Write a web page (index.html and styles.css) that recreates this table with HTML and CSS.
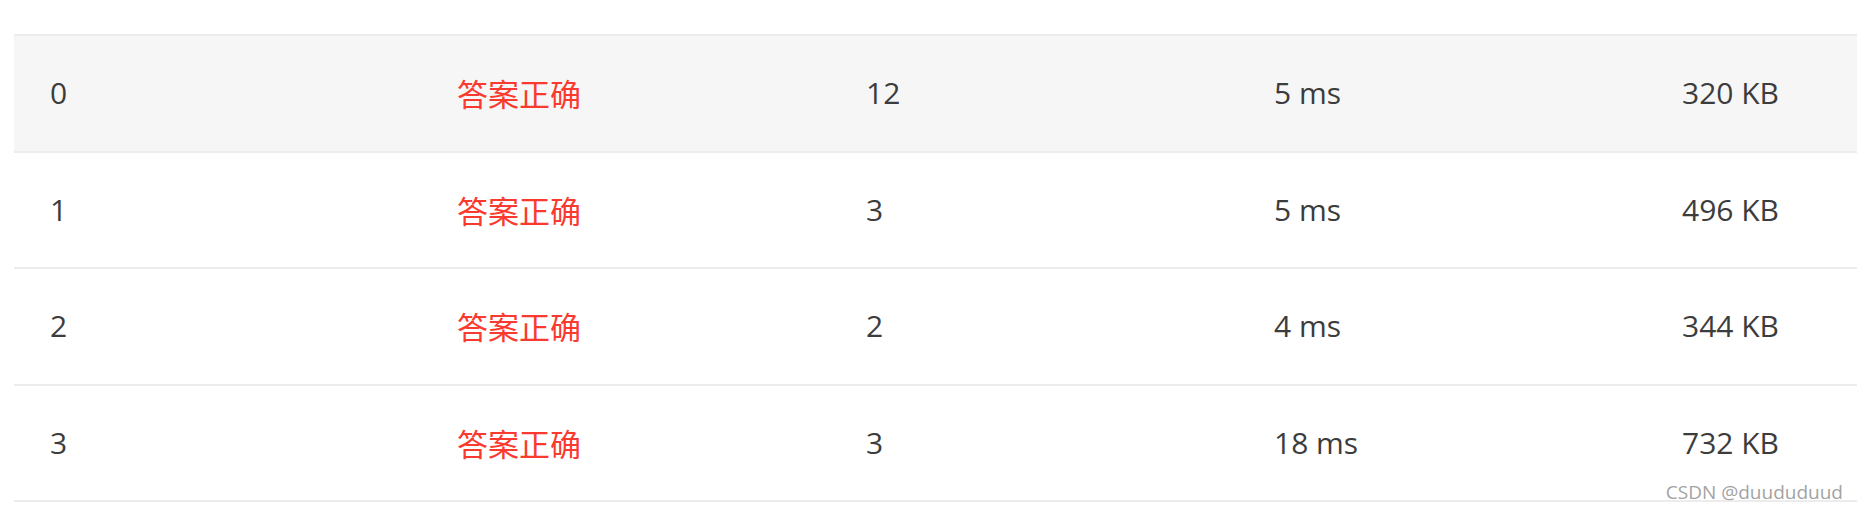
FILE: index.html
```html
<!DOCTYPE html>
<html lang="zh">
<head>
<meta charset="utf-8">
<title>测试点结果</title>
<link rel="stylesheet" href="styles.css">
</head>
<body>
<div class="page">
  <div class="table">
    <div class="row row-alt">
      <div class="cell">0</div>
      <div class="cell ok">答案正确</div>
      <div class="cell">12</div>
      <div class="cell">5 ms</div>
      <div class="cell">320 KB</div>
    </div>
    <div class="row">
      <div class="cell">1</div>
      <div class="cell ok">答案正确</div>
      <div class="cell">3</div>
      <div class="cell">5 ms</div>
      <div class="cell">496 KB</div>
    </div>
    <div class="row">
      <div class="cell">2</div>
      <div class="cell ok">答案正确</div>
      <div class="cell">2</div>
      <div class="cell">4 ms</div>
      <div class="cell">344 KB</div>
    </div>
    <div class="row">
      <div class="cell">3</div>
      <div class="cell ok">答案正确</div>
      <div class="cell">3</div>
      <div class="cell">18 ms</div>
      <div class="cell">732 KB</div>
    </div>
  </div>
  <div class="watermark">CSDN @duududuud</div>
</div>
</body>
</html>
```
FILE: styles.css
```css
html, body {
  margin: 0;
  padding: 0;
  background: #ffffff;
  overflow: hidden;
}

.page {
  position: relative;
  width: 1857px;
  height: 511px;
  padding: 34px 0 0 14px;
  box-sizing: border-box;
  font-family: "Open Sans", "Noto Sans CJK SC", sans-serif;
  color: #3c3c3c;
}

.table {
  width: 2040px;
  border-top: 2px solid #ececec;
}

.row {
  display: grid;
  grid-template-columns: repeat(5, 408px);
  height: 114.5px;
  border-bottom: 2px solid #ececec;
  align-items: center;
}

.row-alt {
  background: #f6f6f6;
}

.cell {
  padding-left: 36px;
  font-size: 30px;
  line-height: 40px;
  white-space: nowrap;
}

.ok {
  padding-left: 35px;
  color: #fa3a2e;
  font-size: 31px;
  font-family: "Noto Sans CJK SC", sans-serif;
}

.watermark {
  position: absolute;
  right: 14px;
  top: 479px;
  font-size: 19px;
  line-height: 26px;
  color: #a3a3a3;
  text-shadow: 0 0 2px #ffffff;
  white-space: nowrap;
}
```
